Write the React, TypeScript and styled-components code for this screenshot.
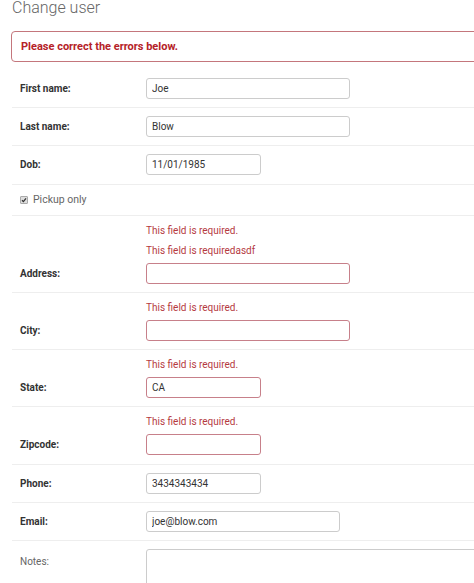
import React from 'react'
import styled, { createGlobalStyle } from 'styled-components'

const GlobalStyle = createGlobalStyle`
  html, body {
    margin: 0;
    padding: 0;
    background: #fff;
    overflow: hidden;
  }
  body {
    font-family: Roboto, "Liberation Sans", sans-serif;
    color: #333;
  }
`

interface Field {
  label: string
  value?: string
  width: number
  errors?: Array<string>
  required?: boolean
}

const fields: Array<Field> = [
  { label: 'First name:', value: 'Joe', width: 204, required: true },
  { label: 'Last name:', value: 'Blow', width: 204, required: true },
  { label: 'Dob:', value: '11/01/1985', width: 115, required: true },
]

const addressFields: Array<Field> = [
  {
    label: 'Address:',
    width: 204,
    required: true,
    errors: ['This field is required.', 'This field is requiredasdf'],
  },
  { label: 'City:', width: 204, required: true, errors: ['This field is required.'] },
  { label: 'State:', value: 'CA', width: 115, required: true, errors: ['This field is required.'] },
  { label: 'Zipcode:', width: 115, required: true, errors: ['This field is required.'] },
  { label: 'Phone:', value: '3434343434', width: 115, required: true },
  { label: 'Email:', value: 'joe@blow.com', width: 194, required: true },
]

function FieldRow({ field }: { field: Field }) {
  const hasErrors = !!field.errors && field.errors.length > 0
  return (
    <Row>
      {hasErrors && (
        <ErrorList>
          {field.errors!.map((e, i) => (
            <ErrorItem key={i}>{e}</ErrorItem>
          ))}
        </ErrorList>
      )}
      <FieldLine>
        <Label required={field.required}>{field.label}</Label>
        <TextInput
          type="text"
          defaultValue={field.value || ''}
          error={hasErrors}
          style={{ width: field.width }}
        />
      </FieldLine>
    </Row>
  )
}

export default function App() {
  return (
    <>
      <GlobalStyle />
      <Page>
        <Title>Change user</Title>
        <ErrorNote>Please correct the errors below.</ErrorNote>

        <Fieldset>
          {fields.map(f => (
            <FieldRow key={f.label} field={f} />
          ))}

          <Row>
            <CheckLine>
              <CheckBox>
                <svg width="6" height="6" viewBox="0 0 6 6">
                  <path d="M1 3.2 L2.4 4.6 L5 1.4" stroke="#333" strokeWidth="1.3" fill="none" />
                </svg>
              </CheckBox>
              <CheckLabel>Pickup only</CheckLabel>
            </CheckLine>
          </Row>

          {addressFields.map(f => (
            <FieldRow key={f.label} field={f} />
          ))}

          <Row>
            <FieldLine align="flex-start">
              <Label offset={6}>Notes:</Label>
              <TextArea />
            </FieldLine>
          </Row>
        </Fieldset>
      </Page>
    </>
  )
}

///////////////////////////////////////////////////////////////////////////////////

const Page = styled.div`
  width: 600px;
  padding-left: 12px;
`

const Title = styled.h1`
  margin: -1px 0 14px;
  font-size: 16px;
  line-height: 18px;
  font-weight: 300;
  color: #666;
`

const ErrorNote = styled.p`
  margin: 0 0 8px -1px;
  padding: 8px 9px;
  border: 1px solid #c4767c;
  border-radius: 4px;
  background: #fff;
  color: #b52228;
  font-size: 11px;
  line-height: 13px;
  font-weight: 700;
`

const Fieldset = styled.div`
  display: flex;
  flex-direction: column;
`

const Row = styled.div`
  padding: 8px 8px 8.2px;
  border-bottom: 1px solid #eee;
`

const ErrorList = styled.ul`
  list-style: none;
  margin: 0 0 5px 126px;
  padding: 0;
  display: flex;
  flex-direction: column;
  gap: 6px;
`

const ErrorItem = styled.li`
  font-size: 10px;
  line-height: 14px;
  color: #b53a3f;
`

const FieldLine = styled.div<{ align?: string }>`
  display: flex;
  align-items: ${p => p.align || 'center'};
`

const Label = styled.label<{ required?: boolean; offset?: number }>`
  flex: none;
  width: 126px;
  padding-top: ${p => p.offset ?? 1}px;
  font-size: 10px;
  line-height: 14px;
  font-weight: ${p => (p.required ? 700 : 400)};
  color: ${p => (p.required ? '#333' : '#666')};
`

const TextInput = styled.input<{ error?: boolean }>`
  box-sizing: border-box;
  height: 21px;
  margin: 0;
  padding: 0 5px;
  border: 1px solid ${p => (p.error ? '#c7808a' : '#ccc')};
  border-radius: 3px;
  background: #fff;
  font-family: Roboto, "Liberation Sans", sans-serif;
  font-size: 10px;
  color: #333;
  outline: none;
`

const TextArea = styled.textarea`
  box-sizing: border-box;
  width: 400px;
  height: 60px;
  margin: 0;
  padding: 4px 5px;
  border: 1px solid #ccc;
  border-radius: 3px;
  resize: none;
  font-family: Roboto, "Liberation Sans", sans-serif;
  font-size: 10px;
`

const CheckLine = styled.div`
  display: flex;
  align-items: center;
  gap: 5px;
  height: 14px;
`

const CheckBox = styled.span`
  box-sizing: border-box;
  display: inline-flex;
  align-items: center;
  justify-content: center;
  width: 8px;
  height: 8px;
  border: 1px solid #aaa;
  border-radius: 1px;
  background: #ddd;
`

const CheckLabel = styled.span`
  font-size: 10.5px;
  line-height: 14px;
  color: #666;
`
